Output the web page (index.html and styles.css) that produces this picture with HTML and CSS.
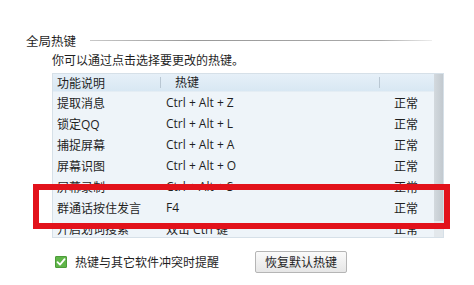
FILE: index.html
```html
<!DOCTYPE html>
<html lang="zh-CN">
<head>
    <meta charset="UTF-8">
    <title>全局热键</title>
    <link rel="stylesheet" href="styles.css">
</head>
<body>
    <div class="panel">
        <!-- 分组标题 -->
        <div class="group-title">
            <span>全局热键</span>
            <i class="rule"></i>
        </div>

        <p class="hint">你可以通过点击选择要更改的热键。</p>

        <!-- 热键列表 -->
        <div class="table">
            <div class="list">
                <div class="row head">
                    <span class="c1">功能说明</span>
                    <span class="c2">热键</span>
                    <span class="c3"></span>
                </div>
                <div class="row"><span class="c1">提取消息</span><span class="c2">Ctrl + Alt + Z</span><span class="c3">正常</span></div>
                <div class="row"><span class="c1">锁定QQ</span><span class="c2">Ctrl + Alt + L</span><span class="c3">正常</span></div>
                <div class="row"><span class="c1">捕捉屏幕</span><span class="c2">Ctrl + Alt + A</span><span class="c3">正常</span></div>
                <div class="row"><span class="c1">屏幕识图</span><span class="c2">Ctrl + Alt + O</span><span class="c3">正常</span></div>
                <div class="row"><span class="c1">屏幕录制</span><span class="c2">Ctrl + Alt + S</span><span class="c3">正常</span></div>
                <div class="row"><span class="c1">群通话按住发言</span><span class="c2">F4</span><span class="c3">正常</span></div>
                <div class="row"><span class="c1">开启划词搜索</span><span class="c2">双击 Ctrl 键</span><span class="c3">正常</span></div>
            </div>
            <div class="scrollbar"><div class="thumb"></div></div>
        </div>

        <!-- 底部选项 -->
        <div class="footer">
            <label class="check">
                <span class="box">
                    <svg width="12" height="12" viewBox="0 0 12 12">
                        <path d="M2.5 6.2 L5 8.6 L9.6 3.2" fill="none" stroke="#fff" stroke-width="1.8" stroke-linecap="round" stroke-linejoin="round"/>
                    </svg>
                </span>
                热键与其它软件冲突时提醒
            </label>
            <button class="btn">恢复默认热键</button>
        </div>

        <!-- 红色标注框 -->
        <div class="highlight"></div>
    </div>
</body>
</html>
```

FILE: styles.css
```css
body {
    margin: 0;
    background: #fff;
    color: #1f1f1f;
    font-family: "Open Sans", "Noto Sans CJK SC", sans-serif;
    font-size: 12px;
}
.panel {
    position: relative;
    width: 474px;
    height: 285px;
    overflow: hidden;
    padding-top: 31px;
    box-sizing: border-box;
}
/* 分组标题 */
.group-title {
    display: flex;
    align-items: center;
    padding-left: 26px;
    height: 18px;
    font-size: 12.5px;
}
.group-title .rule {
    flex: none;
    width: 342px;
    height: 1px;
    margin-left: 14px;
    background: linear-gradient(to right, #c8c8c8, #999 30%, #aaa 85%, rgba(210,210,210,0.4));
}
.hint {
    margin: 3px 0 0 52px;
    line-height: 18px;
    font-size: 12px;
}
/* 列表 */
.table {
    display: flex;
    margin: 3px 0 0 52px;
    width: 392px;
    height: 165px;
    border: 1px solid #d6e0e8;
    box-sizing: border-box;
    background: #eef4f9;
    overflow: hidden;
}
.list {
    flex: 1;
}
.row {
    display: flex;
    align-items: center;
    height: 21px;
}
.row.head {
    height: 17px;
    background: linear-gradient(#e6f0f8, #d8e7f3);
    border-bottom: 1px solid #e4edf4;
}
.c1 {
    width: 107px;
    padding-left: 4px;
    box-sizing: border-box;
}
.c2 {
    width: 219px;
    padding-left: 6px;
    box-sizing: border-box;
}
.c3 {
    flex: 1;
    padding-left: 15px;
}
.head .c2, .head .c3 {
    border-left: 1px solid #b9c7d3;
    height: 11px;
    line-height: 11px;
}
.head .c2 {
    padding-left: 14px;
}
.scrollbar {
    width: 9px;
    background: #e3e8ec;
}
.scrollbar .thumb {
    height: 147px;
    background: linear-gradient(to right, #d3d9de, #c2c9cf);
}
/* 底部 */
.footer {
    display: flex;
    align-items: center;
    margin: 13px 0 0 55px;
}
.check {
    display: flex;
    align-items: center;
    gap: 8px;
    width: 200px;
}
.box {
    display: flex;
    width: 12px;
    height: 12px;
    background: #5fb548;
    border: 1px solid #4d9c3a;
    box-sizing: border-box;
    border-radius: 1px;
}
.box svg {
    margin: -1px;
}
.btn {
    width: 92px;
    height: 22px;
    border: 1px solid #b5b5b5;
    border-radius: 2px;
    background: linear-gradient(#fafafa, #e6e6e6);
    color: #1f1f1f;
    font-family: inherit;
    font-size: 12px;
    padding: 0;
}
/* 红色标注框,叠在列表之上 */
.highlight {
    position: absolute;
    left: 33px;
    top: 184px;
    width: 417px;
    height: 45px;
    border: 6px solid #e2121b;
    box-sizing: border-box;
}
```
